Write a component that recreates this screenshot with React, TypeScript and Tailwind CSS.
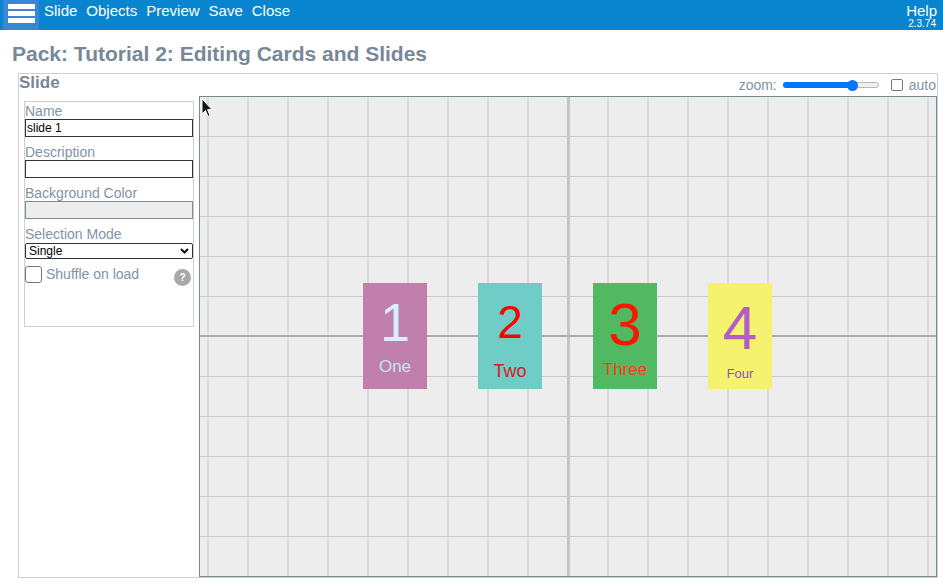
import { useState } from "react";

const VLINES = Array.from({ length: 19 }, (_, i) => 7 + i * 40);
const HLINES = Array.from({ length: 11 }, (_, i) => 39 + i * 40);

const cards = [
    {
        left: "left-[163px]", bg: "bg-[#c17fae]", num: "1", word: "One",
        numCls: "top-[12px] text-[54px] text-[#d6efff]",
        wordCls: "top-[75px] text-[17px] text-[#c4e4fb]",
    },
    {
        left: "left-[278px]", bg: "bg-[#6fccc7]", num: "2", word: "Two",
        numCls: "top-[16px] text-[46px] text-[#ff0000]",
        wordCls: "top-[79px] text-[18px] text-[#d8201c]",
    },
    {
        left: "left-[393px]", bg: "bg-[#52b963]", num: "3", word: "Three",
        numCls: "top-[12px] text-[60px] text-[#ff1400]",
        wordCls: "top-[78px] text-[17px] text-[#ff3d12]",
    },
    {
        left: "left-[508px]", bg: "bg-[#f5f270]", num: "4", word: "Four",
        numCls: "top-[14px] text-[62px] text-[#b25ec4]",
        wordCls: "top-[84px] text-[13px] text-[#8c4fc8]",
    },
];

function TopBar() {
    return (
        <div className="h-[30px] bg-[#0984ce] flex text-white">
            <button className="ml-[3px] w-[36px] h-full bg-[#3787d7] flex flex-col gap-[2px] pl-[5px] pt-[4px]">
                <span className="w-[27px] h-[5px] bg-white" />
                <span className="w-[27px] h-[5px] bg-white" />
                <span className="w-[27px] h-[5px] bg-white" />
            </button>
            <nav className="ml-[5px] flex gap-[9px] pt-[2px] text-[15px] leading-[17px]">
                <span>Slide</span>
                <span>Objects</span>
                <span>Preview</span>
                <span>Save</span>
                <span>Close</span>
            </nav>
            <div className="ml-auto pr-[6px] pt-[4px] flex flex-col items-end">
                <span className="text-[15px] leading-[14px]">Help</span>
                <span className="mt-[1px] text-[10px] leading-[10px] pr-[1px]">2.3.74</span>
            </div>
        </div>
    );
}

function ZoomControls() {
    const [auto, setAuto] = useState(false);
    return (
        <div className="flex items-center h-[22px] pr-[1px] text-[14px] leading-[16px] text-[#8093a0]">
            <span>zoom:</span>
            <div className="ml-[6px] relative w-[96px] h-[6px] rounded-full bg-[#efefef] border border-[#b8b8b8]">
                <div className="absolute left-[-1px] top-[-1px] w-[70px] h-[6px] rounded-full bg-[#0075ff]" />
                <div className="absolute left-[63px] top-[-3.5px] w-[11px] h-[11px] rounded-full bg-[#0075ff]" />
            </div>
            <span onClick={() => setAuto(!auto)}
                className="ml-[12px] w-[12px] h-[12px] rounded-[2px] border border-[#767676] bg-white" />
            <span className="ml-[6px]">auto</span>
        </div>
    );
}

function Field({ label, children }: { label: string; children: React.ReactNode }) {
    return (
        <div className="mb-[7px]">
            <div>{label}</div>
            {children}
        </div>
    );
}

function Sidebar() {
    return (
        <div className="mt-[5px] w-[170px] h-[226px] border border-[#cfcfcf] pt-[1px] text-[14px] leading-[16px] text-[#8094a6]">
            <Field label="Name">
                <input defaultValue="slide 1"
                    className="block w-full h-[18px] border border-[#333] px-[1px] text-[12px] text-black outline-none" />
            </Field>
            <Field label="Description">
                <input className="block w-full h-[18px] border border-[#333] px-[1px] text-[12px] text-black outline-none" />
            </Field>
            <Field label="Background Color">
                <input disabled
                    className="block w-full h-[18px] border border-[#7d8d98] bg-[#ededed] px-[1px] text-[12px] outline-none" />
            </Field>
            <div>Selection Mode</div>
            <div className="relative mt-[1px]">
                <select defaultValue="Single"
                    className="block w-full h-[16px] border border-[#333] rounded-[2px] pl-[3px] text-[12px] leading-[14px] text-black bg-white appearance-none outline-none">
                    <option>Single</option>
                    <option>Multiple</option>
                </select>
                <svg className="absolute right-[4px] top-[5px]" width="9" height="6" viewBox="0 0 9 6">
                    <path d="M1 1 L4.5 4.5 L8 1" fill="none" stroke="#111" strokeWidth="2" />
                </svg>
            </div>
            <div className="mt-[7px] flex items-start">
                <span className="w-[17px] h-[17px] rounded-[3px] border border-[#767676] bg-white" />
                <span className="ml-[4px]">Shuffle on load</span>
                <span className="ml-auto mr-[2px] mt-[3px] w-[17px] h-[17px] rounded-full bg-[#a9a9a9] text-white text-[10px] leading-[17px] font-bold text-center">?</span>
            </div>
        </div>
    );
}

function Canvas() {
    return (
        <div className="relative w-[738px] h-[481px] border border-[#738a94] bg-[#ededed] overflow-hidden">
            <svg className="absolute inset-0" width="736" height="479">
                {VLINES.map((x, i) => (
                    <rect key={"v" + i} x={x} y={0} width={i === 9 ? 3 : 2} height={479}
                        fill={i === 9 ? "#c6c6c6" : "#dbdbdb"} />
                ))}
                {HLINES.map((y, i) => (
                    <rect key={"h" + i} x={0} y={i === 5 ? y - 1 : y} width={736} height={i === 5 ? 2 : 1}
                        fill={i === 5 ? "#ababab" : "#c9c9c9"} />
                ))}
            </svg>
            {cards.map(c => (
                <div key={c.num} className={`absolute top-[186px] w-[64px] h-[106px] ${c.left} ${c.bg}`}>
                    <div className={`absolute inset-x-0 text-center leading-none ${c.numCls}`}>{c.num}</div>
                    <div className={`absolute inset-x-0 text-center leading-none ${c.wordCls}`}>{c.word}</div>
                </div>
            ))}
            {/* mouse pointer */}
            <svg className="absolute left-[1px] top-[1px]" width="13" height="21" viewBox="0 0 13 21">
                <path d="M1 1 L1 16 L4.5 12.5 L7 18.5 L9 17.5 L6.6 11.6 L11 11.6 Z" fill="#111" stroke="#fff" strokeWidth="1" />
            </svg>
        </div>
    );
}

export default function App() {
    return (
        <div className="w-[943px] h-[583px] overflow-hidden bg-white font-['Liberation_Sans',Arial,sans-serif]">
            <TopBar />
            <h1 className="ml-[12px] mt-[12px] text-[21px] leading-[24px] font-bold text-[#778899]">
                Pack: Tutorial 2: Editing Cards and Slides
            </h1>
            <div className="ml-[18px] mt-[7px] w-[920px] h-[505px] border border-[#cfcfcf] flex flex-col">
                <div className="h-[22px] flex justify-between">
                    <span className="text-[17px] leading-[18px] font-bold text-[#778899]">Slide</span>
                    <ZoomControls />
                </div>
                <div className="flex gap-[5px] pl-[5px]">
                    <Sidebar />
                    <Canvas />
                </div>
            </div>
        </div>
    );
}
